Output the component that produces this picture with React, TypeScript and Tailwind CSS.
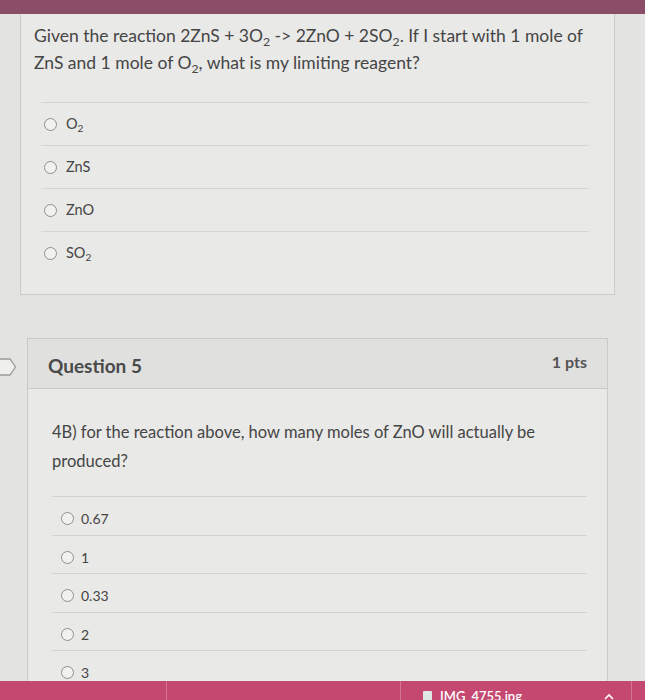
import React from 'react';

const Radio = () => (
  <span className="inline-block w-[13px] h-[13px] rounded-full border border-[#8f8f8d] bg-[#f1f1ef] shrink-0" />
);

const Sub = ({ children }: { children: React.ReactNode }) => (
  <span className="text-[0.7em] leading-none align-[-0.3em]">{children}</span>
);

const firstOptions: React.ReactNode[] = [
  <>O<Sub>2</Sub></>,
  'ZnS',
  'ZnO',
  <>SO<Sub>2</Sub></>,
];

const q5Options = ['0.67', '1', '0.33', '2', '3'];

export default function App() {
  return (
    <div
      className="w-[645px] h-[700px] bg-[#e3e3e1] flex flex-col overflow-hidden text-[#454545]"
      style={{ fontFamily: 'Lato, "Open Sans", sans-serif' }}
    >
      {/* browser chrome */}
      <div className="h-[14px] bg-[#8c4d69] shrink-0" />

      <div className="flex-1 overflow-hidden flex flex-col">
        {/* Question 4 (tail) */}
        <div className="ml-[20px] mr-[30px] h-[281px] shrink-0 border border-t-0 border-[#cacac8] bg-[#e9e9e7] flex flex-col">
          <p className="pl-[13px] pr-[10px] pt-[8px] text-[17.5px] leading-[27px]">
            Given the reaction 2ZnS + 3O<Sub>2</Sub> -&gt; 2ZnO + 2SO<Sub>2</Sub>. If I start with 1 mole of
            <br />
            ZnS and 1 mole of O<Sub>2</Sub>, what is my limiting reagent?
          </p>
          <div className="mt-[26px] ml-[20px] mr-[25px]">
            {firstOptions.map((o, i) => (
              <div
                key={i}
                className="h-[43px] flex items-center gap-[9px] pl-[3px] text-[14.5px] border-t border-[#d5d5d3]"
              >
                <Radio />
                <span>{o}</span>
              </div>
            ))}
          </div>
        </div>

        {/* Question 5 */}
        <div className="mt-[43px] flex items-start gap-[10px]">
          <svg width="17" height="20" viewBox="0 0 17 20" className="mt-[19px] shrink-0">
            <path d="M-2 2 H10 L15.5 10 L10 18 H-2" fill="#efefed" stroke="#9a9a98" strokeWidth="1.3" />
          </svg>
          <div className="w-[581px] border border-[#cacac8] bg-[#e9e9e7]">
            <div className="h-[50px] bg-[#e0e0de] border-b border-[#cacac8] flex items-center justify-between pl-[20px] pr-[20px] pt-[5px]">
              <span className="text-[19px] font-bold text-[#4a4a4a]">Question 5</span>
              <span className="text-[16px] font-bold text-[#555] -mt-[8px]">1 pts</span>
            </div>
            <div className="pl-[24px] pr-[20px]">
              <p className="pt-[29px] text-[16.5px] leading-[29px]">
                4B) for the reaction above, how many moles of ZnO will actually be
                <br />
                produced?
              </p>
              <div className="mt-[20px]">
                {q5Options.map((o) => (
                  <div
                    key={o}
                    className="h-[38.5px] pt-[6px] flex items-center gap-[7px] pl-[9px] border-t border-[#d3d3d1] text-[14px]"
                  >
                    <Radio />
                    <span>{o}</span>
                  </div>
                ))}
              </div>
            </div>
          </div>
        </div>
      </div>

      {/* download bar */}
      <div className="h-[19px] shrink-0 bg-[#c4486f] flex overflow-hidden">
        <div className="w-[167px] border-r border-[#d4758f]" />
        <div className="w-[234px] border-r border-[#d4758f]" />
        <div className="w-[231px] border-r border-[#d4758f] flex items-start pt-[9px] pl-[22px] gap-[8px]">
          <span className="w-[9px] h-[12px] bg-[#dfe8e4] rounded-[1px] mt-[1px]" />
          <span className="text-[13px] leading-[13px] text-white font-semibold">IMG_4755.jpg</span>
          <svg width="12" height="8" viewBox="0 0 12 8" className="ml-auto mr-[16px] mt-[2px]">
            <path d="M2 7 L6 3 L10 7" fill="none" stroke="#fff" strokeWidth="1.6" />
          </svg>
        </div>
      </div>
    </div>
  );
}
